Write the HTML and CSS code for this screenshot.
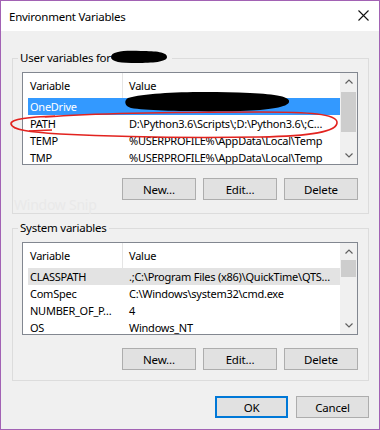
FILE: index.html
```html
<!DOCTYPE html>
<html lang="en">
<head>
    <meta charset="UTF-8">
    <title>Environment Variables</title>
    <link rel="stylesheet" href="styles.css">
</head>
<body>
  <div class="window">
    <div class="titlebar">
      <span class="title">Environment Variables</span>
      <svg class="close" width="11" height="11" viewBox="0 0 11 11">
        <path d="M0.5,0.5 L10.5,10.5 M10.5,0.5 L0.5,10.5" stroke="#111" stroke-width="1.1" fill="none"/>
      </svg>
    </div>

    <div class="content">
      <fieldset class="group">
        <legend>User variables for <span class="hidden-name"></span></legend>
        <div class="listview">
          <div class="rows">
            <div class="row header"><div class="col-var">Variable</div><div class="col-val">Value</div></div>
            <div class="row selected"><div class="col-var">OneDrive</div><div class="col-val"></div></div>
            <div class="row"><div class="col-var">PATH</div><div class="col-val">D:\Python3.6\Scripts\;D:\Python3.6\;C…</div></div>
            <div class="row"><div class="col-var">TEMP</div><div class="col-val">%USERPROFILE%\AppData\Local\Temp</div></div>
            <div class="row"><div class="col-var">TMP</div><div class="col-val">%USERPROFILE%\AppData\Local\Temp</div></div>
          </div>
          <div class="scrollbar">
            <div class="arrow"><svg width="8" height="5" viewBox="0 0 8 5"><path d="M0.5,4.5 L4,1 L7.5,4.5" stroke="#606060" stroke-width="1.2" fill="none"/></svg></div>
            <div class="thumb thumb-user"></div>
            <div class="track"></div>
            <div class="arrow"><svg width="8" height="5" viewBox="0 0 8 5"><path d="M0.5,0.5 L4,4 L7.5,0.5" stroke="#606060" stroke-width="1.2" fill="none"/></svg></div>
          </div>
        </div>
        <div class="button-row">
          <button>New…</button>
          <button>Edit…</button>
          <button>Delete</button>
        </div>
      </fieldset>

      <fieldset class="group group-system">
        <legend>System variables</legend>
        <div class="listview">
          <div class="rows">
            <div class="row header"><div class="col-var">Variable</div><div class="col-val">Value</div></div>
            <div class="row inactive"><div class="col-var">CLASSPATH</div><div class="col-val">.;C:\Program Files (x86)\QuickTime\QTS…</div></div>
            <div class="row"><div class="col-var">ComSpec</div><div class="col-val">C:\Windows\system32\cmd.exe</div></div>
            <div class="row"><div class="col-var">NUMBER_OF_P…</div><div class="col-val">4</div></div>
            <div class="row"><div class="col-var">OS</div><div class="col-val">Windows_NT</div></div>
          </div>
          <div class="scrollbar">
            <div class="arrow"><svg width="8" height="5" viewBox="0 0 8 5"><path d="M0.5,4.5 L4,1 L7.5,4.5" stroke="#606060" stroke-width="1.2" fill="none"/></svg></div>
            <div class="thumb thumb-system"></div>
            <div class="track"></div>
            <div class="arrow"><svg width="8" height="5" viewBox="0 0 8 5"><path d="M0.5,0.5 L4,4 L7.5,0.5" stroke="#606060" stroke-width="1.2" fill="none"/></svg></div>
          </div>
        </div>
        <div class="button-row">
          <button>New…</button>
          <button>Edit…</button>
          <button>Delete</button>
        </div>
      </fieldset>

      <div class="footer">
        <button class="default">OK</button>
        <button>Cancel</button>
      </div>
    </div>

    <div class="ghost">Window Snip</div>

    <!-- hand-drawn marks on top of the screenshot -->
    <svg class="marks" width="380" height="430" viewBox="0 0 380 430">
      <path d="M111,57 C111,51 126,50 141,51 C156,51 167,52 167,57 C167,62 152,63 137,63 C121,63 111,62 111,57 Z" fill="#000"/>
      <path d="M128,98 C150,92 200,91 250,93 C276,94 291,97 289,102 C288,107 270,110 240,111 C200,112 150,111 131,108 C124,106 124,100 128,98 Z" fill="#000"/>
      <path d="M55,116 C30,117 10,119 11,124 C12,130 30,132 60,134 C120,137 200,138 260,137 C310,136 338,132 337,122 C336,114 310,112 260,112 C180,112 100,113 45,117" stroke="#e2231f" stroke-width="1.6" fill="none"/>
      <path d="M29,131 L52,130" stroke="#e2231f" stroke-width="1.6" fill="none"/>
    </svg>
  </div>
</body>
</html>
```

FILE: styles.css
```css
body {
    margin: 0;
    padding: 0;
    font-family: "Noto Sans", "Open Sans", sans-serif;
    font-size: 11px;
    letter-spacing: -0.25px;
    color: #000;
}
.window {
    position: relative;
    width: 380px;
    height: 430px;
    box-sizing: border-box;
    border: 1px solid #a262b4;
    background-color: #f0f0f0;
    overflow: hidden;
}
.titlebar {
    height: 30px;
    background-color: #fff;
    display: flex;
    align-items: center;
    justify-content: space-between;
    padding: 0 10px 0 8px;
}
.title {
    font-size: 11.5px;
}
.close {
    display: block;
    margin-top: -1px;
}
.content {
    padding: 0 10px 0 11px;
}
.group {
    margin: 19px 0 0 0;
    padding: 6px 10px 13px 9px;
    border: 1px solid #dcdcdc;
    min-width: 0;
}
.group-system {
    margin-top: 6px;
    padding-bottom: 10px;
}
.group legend {
    margin-left: -4px;
    padding: 0 2px;
    line-height: 16px;
    font-size: 11.5px;
}
.hidden-name {
    display: inline-block;
    width: 56px;
}
.listview {
    width: 336px;
    height: 93px;
    box-sizing: border-box;
    border: 1px solid #828790;
    background-color: #fff;
    display: flex;
}
.rows {
    flex: 1;
    overflow: hidden;
    padding-left: 5px;
}
.row {
    display: flex;
    height: 17px;
    line-height: 17px;
    white-space: nowrap;
}
.row.header {
    height: 25px;
    line-height: 25px;
}
.col-var {
    width: 95px;
    padding-left: 2px;
    box-sizing: border-box;
    flex-shrink: 0;
}
.col-val {
    padding-left: 6px;
}
.header .col-var {
    border-right: 1px solid #e5e5e5;
}
.selected {
    background-color: #3399ff;
    color: #fff;
}
.inactive {
    background-color: #e3e3e3;
}
.scrollbar {
    width: 17px;
    background-color: #f0f0f0;
    display: flex;
    flex-direction: column;
}
.arrow {
    height: 17px;
    display: flex;
    align-items: center;
    justify-content: center;
    flex-shrink: 0;
}
.arrow svg {
    display: block;
}
.thumb {
    margin: 0 1px;
    background-color: #cdcdcd;
}
.thumb-user {
    margin-top: 2px;
    height: 40px;
}
.thumb-system {
    height: 17px;
}
.track {
    flex: 1;
}
.button-row {
    display: flex;
    justify-content: flex-end;
    gap: 7px;
    margin-top: 13px;
}
button {
    width: 74px;
    height: 22px;
    padding: 0;
    border: 1px solid #adadad;
    background-color: #e1e1e1;
    font-family: "Noto Sans", "Open Sans", sans-serif;
    font-size: 11.5px;
    letter-spacing: -0.2px;
    color: #000;
}
.footer {
    display: flex;
    justify-content: flex-end;
    gap: 8px;
    margin-top: 15px;
}
.footer button {
    width: 73px;
}
button.default {
    border-color: #0078d7;
    box-shadow: inset 0 0 0 1px #0078d7;
}
.ghost {
    position: absolute;
    left: 13px;
    top: 194px;
    font-size: 14px;
    color: #e9e9e9;
}
.marks {
    position: absolute;
    left: -1px;
    top: -1px;
    pointer-events: none;
}
```
